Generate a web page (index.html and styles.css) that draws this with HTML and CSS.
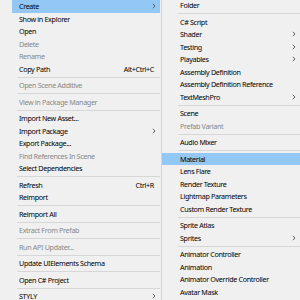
FILE: index.html
```html
<!DOCTYPE html>
<html>
<head>
<meta charset="utf-8">
<link rel="stylesheet" href="styles.css">
</head>
<body>
<div class="screen">
  <div class="menu menu-left">
    <div class="item active"><span class="label">Create</span><svg class="arrow" viewBox="0 0 4 6"><path d="M0.8 0.8 L3 3 L0.8 5.2"/></svg></div>
    <div class="item"><span class="label">Show in Explorer</span></div>
    <div class="item"><span class="label">Open</span></div>
    <div class="item disabled"><span class="label">Delete</span></div>
    <div class="item disabled"><span class="label">Rename</span></div>
    <div class="item"><span class="label">Copy Path</span><span class="shortcut">Alt+Ctrl+C</span></div>
    <div class="sep"></div>
    <div class="item disabled"><span class="label">Open Scene Additive</span></div>
    <div class="sep"></div>
    <div class="item disabled"><span class="label">View in Package Manager</span></div>
    <div class="sep"></div>
    <div class="item"><span class="label">Import New Asset...</span></div>
    <div class="item"><span class="label">Import Package</span><svg class="arrow" viewBox="0 0 4 6"><path d="M0.8 0.8 L3 3 L0.8 5.2"/></svg></div>
    <div class="item"><span class="label">Export Package...</span></div>
    <div class="item disabled"><span class="label">Find References In Scene</span></div>
    <div class="item"><span class="label">Select Dependencies</span></div>
    <div class="sep"></div>
    <div class="item"><span class="label">Refresh</span><span class="shortcut">Ctrl+R</span></div>
    <div class="item"><span class="label">Reimport</span></div>
    <div class="sep"></div>
    <div class="item"><span class="label">Reimport All</span></div>
    <div class="sep"></div>
    <div class="item disabled"><span class="label">Extract From Prefab</span></div>
    <div class="sep"></div>
    <div class="item disabled"><span class="label">Run API Updater...</span></div>
    <div class="sep"></div>
    <div class="item"><span class="label">Update UIElements Schema</span></div>
    <div class="sep"></div>
    <div class="item"><span class="label">Open C# Project</span></div>
    <div class="sep"></div>
    <div class="item"><span class="label">STYLY</span><svg class="arrow" viewBox="0 0 4 6"><path d="M0.8 0.8 L3 3 L0.8 5.2"/></svg></div>
  </div>
  <div class="menu menu-right">
    <div class="item"><span class="label">Folder</span></div>
    <div class="sep"></div>
    <div class="item"><span class="label">C# Script</span></div>
    <div class="item"><span class="label">Shader</span><svg class="arrow" viewBox="0 0 4 6"><path d="M0.8 0.8 L3 3 L0.8 5.2"/></svg></div>
    <div class="item"><span class="label">Testing</span><svg class="arrow" viewBox="0 0 4 6"><path d="M0.8 0.8 L3 3 L0.8 5.2"/></svg></div>
    <div class="item"><span class="label">Playables</span><svg class="arrow" viewBox="0 0 4 6"><path d="M0.8 0.8 L3 3 L0.8 5.2"/></svg></div>
    <div class="item"><span class="label">Assembly Definition</span></div>
    <div class="item"><span class="label">Assembly Definition Reference</span></div>
    <div class="item"><span class="label">TextMeshPro</span><svg class="arrow" viewBox="0 0 4 6"><path d="M0.8 0.8 L3 3 L0.8 5.2"/></svg></div>
    <div class="sep"></div>
    <div class="item"><span class="label">Scene</span></div>
    <div class="item disabled"><span class="label">Prefab Variant</span></div>
    <div class="sep"></div>
    <div class="item"><span class="label">Audio Mixer</span></div>
    <div class="sep"></div>
    <div class="item active"><span class="label">Material</span></div>
    <div class="item"><span class="label">Lens Flare</span></div>
    <div class="item"><span class="label">Render Texture</span></div>
    <div class="item"><span class="label">Lightmap Parameters</span></div>
    <div class="item"><span class="label">Custom Render Texture</span></div>
    <div class="sep"></div>
    <div class="item"><span class="label">Sprite Atlas</span></div>
    <div class="item"><span class="label">Sprites</span><svg class="arrow" viewBox="0 0 4 6"><path d="M0.8 0.8 L3 3 L0.8 5.2"/></svg></div>
    <div class="sep"></div>
    <div class="item"><span class="label">Animator Controller</span></div>
    <div class="item"><span class="label">Animation</span></div>
    <div class="item"><span class="label">Animator Override Controller</span></div>
    <div class="item"><span class="label">Avatar Mask</span></div>
    <div class="sep"></div>
  </div>
</div>
</body>
</html>
```
FILE: styles.css
```css
html, body {
  margin: 0;
  padding: 0;
  background: #f0f0f0;
}
.screen {
  width: 300px;
  height: 300px;
  overflow: hidden;
  display: flex;
  font-family: "Noto Sans", "Open Sans", sans-serif;
  font-size: 7.2px;
  letter-spacing: -0.35px;
  color: #000;
  background: #f0f0f0;
}
.menu {
  display: flex;
  flex-direction: column;
  flex-shrink: 0;
}
.menu-left {
  width: 148px;
  padding-left: 12px;
  padding-right: 1px;
}
.menu-right {
  width: 139px;
  border-left: 1px solid #d4d4d4;
  margin-top: -1px;
}
.item {
  height: 12.5px;
  flex-shrink: 0;
  display: flex;
  align-items: center;
  line-height: 12.5px;
}
.menu-left .item { padding-left: 7px; padding-right: 4px; }
.menu-right .item { padding-left: 18px; padding-right: 5px; }
.item .label { flex: 1; white-space: nowrap; }
.item.active { background: #93c8f4; }
.item.disabled { color: #888; }
.shortcut { white-space: nowrap; padding-right: 2px; }
.arrow {
  width: 4px;
  height: 6px;
  fill: none;
  stroke: #606060;
  stroke-width: 1;
}
.sep {
  height: 1px;
  flex-shrink: 0;
  background: #d7d7d7;
  margin: 1.5px 0 1.5px 5px;
}
.menu-right .sep { margin-left: 16px; }
```
